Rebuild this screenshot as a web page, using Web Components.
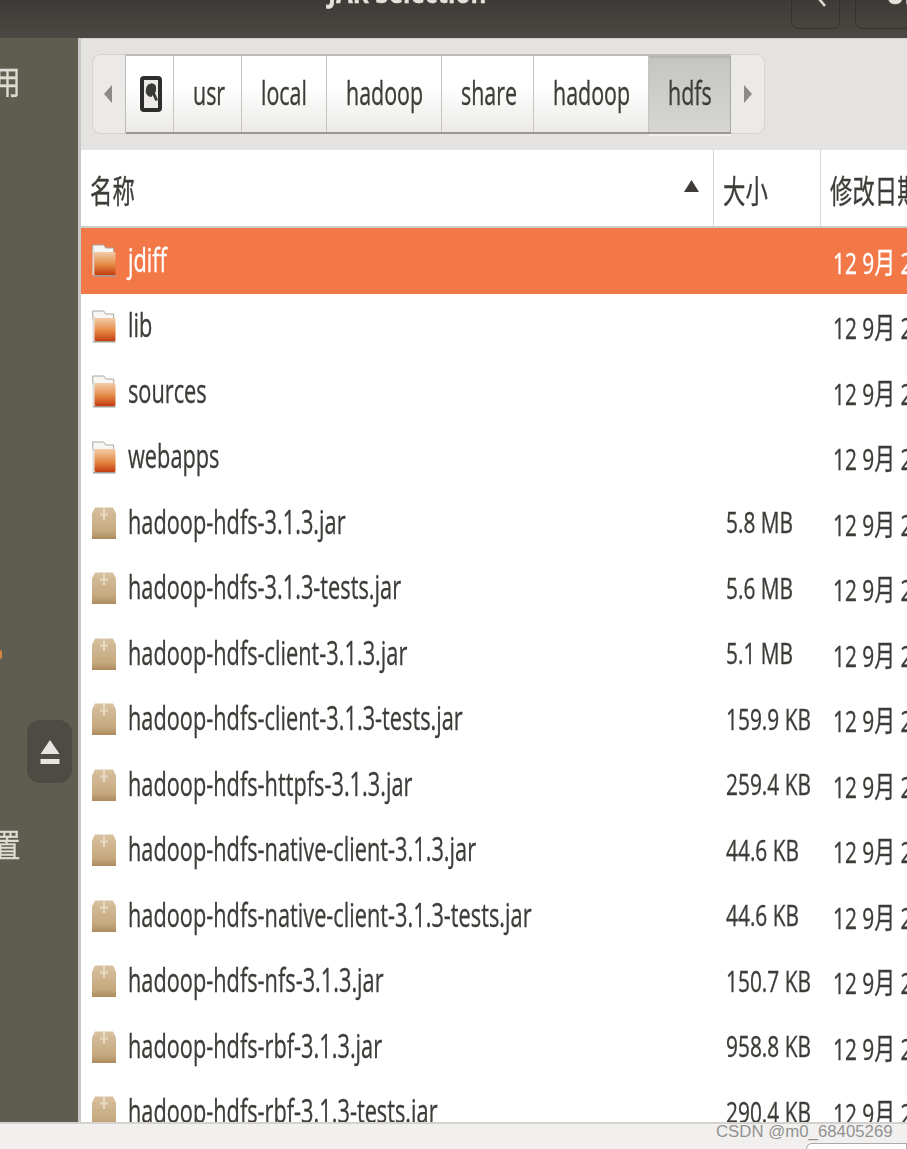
<!DOCTYPE html>
<html><head><meta charset="utf-8">
<style>
html,body{margin:0;padding:0;height:100%;overflow:hidden;background:#f1f0ee}
body{font-family:"Open Sans","Noto Sans CJK SC",sans-serif}
</style></head><body>
<file-dialog>
  <title-bar slot="title"></title-bar>
  <side-bar slot="side"></side-bar>
  <path-bar slot="path"></path-bar>
  <list-header slot="head"></list-header>
  <file-row slot="rows" kind="dir" name="jdiff" date="12 9月 2" selected></file-row>
  <file-row slot="rows" kind="dir" name="lib" date="12 9月 2"></file-row>
  <file-row slot="rows" kind="dir" name="sources" date="12 9月 2"></file-row>
  <file-row slot="rows" kind="dir" name="webapps" date="12 9月 2"></file-row>
  <file-row slot="rows" kind="jar" name="hadoop-hdfs-3.1.3.jar" size="5.8 MB" date="12 9月 2"></file-row>
  <file-row slot="rows" kind="jar" name="hadoop-hdfs-3.1.3-tests.jar" size="5.6 MB" date="12 9月 2"></file-row>
  <file-row slot="rows" kind="jar" name="hadoop-hdfs-client-3.1.3.jar" size="5.1 MB" date="12 9月 2"></file-row>
  <file-row slot="rows" kind="jar" name="hadoop-hdfs-client-3.1.3-tests.jar" size="159.9 KB" date="12 9月 2"></file-row>
  <file-row slot="rows" kind="jar" name="hadoop-hdfs-httpfs-3.1.3.jar" size="259.4 KB" date="12 9月 2"></file-row>
  <file-row slot="rows" kind="jar" name="hadoop-hdfs-native-client-3.1.3.jar" size="44.6 KB" date="12 9月 2"></file-row>
  <file-row slot="rows" kind="jar" name="hadoop-hdfs-native-client-3.1.3-tests.jar" size="44.6 KB" date="12 9月 2"></file-row>
  <file-row slot="rows" kind="jar" name="hadoop-hdfs-nfs-3.1.3.jar" size="150.7 KB" date="12 9月 2"></file-row>
  <file-row slot="rows" kind="jar" name="hadoop-hdfs-rbf-3.1.3.jar" size="958.8 KB" date="12 9月 2"></file-row>
  <file-row slot="rows" kind="jar" name="hadoop-hdfs-rbf-3.1.3-tests.jar" size="290.4 KB" date="12 9月 2"></file-row>
</file-dialog>
<script>
const FONT='"Open Sans","Noto Sans CJK SC",sans-serif';
function def(name,html){
  customElements.define(name,class extends HTMLElement{
    connectedCallback(){
      if(this.shadowRoot)return;
      const r=this.attachShadow({mode:'open'});
      r.innerHTML=typeof html==='function'?html(this):html;
    }
  });
}
/* squeezed text: the reference is a horizontally compressed, blurry photo */
def('sq-text',el=>{
  const sx=el.getAttribute('sx')||'.68', fs=el.getAttribute('fs')||'32', w=el.getAttribute('wt')||'400';
  return `<style>:host{display:block;width:0;white-space:nowrap;font:${w} ${fs}px/1 ${FONT}}
  span{display:inline-block;transform:scaleX(${sx});transform-origin:0 50%;filter:blur(.45px);-webkit-text-stroke:.35px currentColor}</style><span><slot></slot></span>`;
});
def('file-dialog',`<style>
:host{display:flex;flex-direction:column;width:907px;height:1149px;overflow:hidden;background:#f1f0ee}
.mid{display:flex;height:1084px;flex:none}
.main{flex:1;min-width:0;display:flex;flex-direction:column;background:#fff}
.rows{flex:1;overflow:hidden;min-height:0}
.foot{flex:1;background:#f1f0ee;border-top:2px solid #d3d2cf;display:flex;justify-content:flex-end;align-items:flex-end;position:relative}
.btn{width:99px;height:5px;background:#fff;border:1px solid #aaa;border-bottom:0;border-radius:6px 0 0 0}
.wm{position:absolute;left:716px;top:0;font:16.8px/1 "Liberation Sans",sans-serif;color:#929292;white-space:nowrap}
</style>
<slot name="title"></slot>
<div class="mid"><slot name="side"></slot>
<div class="main"><slot name="path"></slot><slot name="head"></slot><div class="rows"><slot name="rows"></slot></div></div></div>
<div class="foot"><div class="btn"></div><div class="wm">CSDN @m0_68405269</div></div>`);
def('title-bar',`<style>
:host{display:block;height:38px;flex:none;background:linear-gradient(#3c3b37,#4b4943);position:relative;overflow:hidden;color:#e6e2da}
.t{position:absolute;left:328px;top:-23px}
.b{position:absolute;top:-10px;border:1px solid #33322e;border-radius:7px;box-sizing:border-box;height:39px;overflow:hidden}
.b1{left:791px;width:49px}.b2{left:855px;width:60px}
svg{position:absolute;left:25px;top:-1px}
.o{position:absolute;left:30px;top:-13px}
</style>
<div class="t"><sq-text sx=".84" fs="29" wt="700">JAR Selection</sq-text></div>
<div class="b b1"><svg width="14" height="20" viewBox="0 0 14 20"><path d="M8 3L3 10l5 6" fill="none" stroke="#dfdbd2" stroke-width="2.6"/></svg></div>
<div class="b b2"><div class="o"><sq-text sx=".8" fs="29" wt="700">OK</sq-text></div></div>`);
def('side-bar',`<style>
:host{display:block;width:78px;flex:none;background:#5f5d50;border-right:3px solid #c9c9c7;position:relative;overflow:hidden;color:#dedcd5}
.a{position:absolute;left:-32px}
.ej{position:absolute;left:27px;top:682px;width:45px;height:63px;border-radius:13px;background:#4c4b44;display:flex;align-items:center;justify-content:center}
.dot{position:absolute;left:-3px;top:612px;width:5px;height:9px;border-radius:2px;background:#d9813f}
</style>
<div class="a" style="top:28px"><sq-text sx=".82" fs="32">常用</sq-text></div>
<div class="dot"></div>
<div class="ej"><svg width="20" height="26" viewBox="0 0 20 26"><path d="M10 1L19.500 15H.5z" fill="#e6e5e1"/><rect x=".5" y="20" width="19" height="5" fill="#e6e5e1"/></svg></div>
<div class="a" style="top:791px"><sq-text sx=".82" fs="32">设置</sq-text></div>`);
def('path-seg',el=>{
  const on=el.hasAttribute('on');
  const w=el.getAttribute('w');
  return `<style>:host{display:flex;align-items:center;box-sizing:border-box;width:${w}px;flex:none;padding-left:${el.getAttribute('p')||0}px;
  color:#3d3c38;border-right:1px solid ${on?'#a9a9a6':'#c6c5c1'};
  background:${on?'linear-gradient(#c4c4c3,#d7d6d5)':'linear-gradient(#fff 40%,#ebeae8)'};
  ${on?'box-shadow:inset 0 2px 1px #b5b5b3,0 2px 0 #9a9997,0 4px 0 #f0efed':''}}</style><slot></slot>`;
});
def('path-bar',`<style>
:host{display:block;height:112px;box-sizing:border-box;padding:15px 0 0 11px;background:#e4e3e1;flex:none;border-top:1px solid #cfcecc}
.bar{display:flex;width:673px;height:80px;box-sizing:border-box}
.arr{width:34px;flex:none;box-sizing:border-box;display:flex;align-items:center;justify-content:center;border:1.5px solid #d4d3d0;background:#eceae8}
.l{border-radius:9px 0 0 9px;border-right:1px solid #bcbbb8;padding-right:3px}
.r{border-radius:0 9px 9px 0;border-left:0}
.segs{display:flex;border-top:2px solid #bdbcb9;border-bottom:2px solid #9a9997}
sq-text{margin-top:-2px}
svg{filter:blur(.3px)}
</style>
<div class="bar">
<div class="arr l"><svg width="8" height="18" viewBox="0 0 8 18"><path d="M8 0V18L0 9z" fill="#8c8b87"/></svg></div>
<div class="segs">
<path-seg w="48" p="14"><svg width="22" height="36" viewBox="0 0 22 36"><rect x="2" y="2" width="18" height="32" rx="2" fill="#ecebe9" stroke="#2d2d2c" stroke-width="4"/><path d="M6 13a5.500 6 0 0 1 10-3v5l-1 2 3 7-2.500 1-3-6-1 2a6 6 0 0 1-5.500-8z" fill="#3a3a39"/></svg></path-seg>
<path-seg w="68" p="19"><sq-text sx=".67">usr</sq-text></path-seg>
<path-seg w="85" p="19"><sq-text sx=".67">local</sq-text></path-seg>
<path-seg w="115" p="19"><sq-text sx=".67">hadoop</sq-text></path-seg>
<path-seg w="92" p="19"><sq-text sx=".67">share</sq-text></path-seg>
<path-seg w="115" p="19"><sq-text sx=".67">hadoop</sq-text></path-seg>
<path-seg w="82" p="19" on><sq-text sx=".67">hdfs</sq-text></path-seg>
</div>
<div class="arr r"><svg width="8" height="18" viewBox="0 0 8 18"><path d="M0 0V18L8 9z" fill="#8c8b87"/></svg></div>
</div>`);
def('list-header',`<style>
:host{display:flex;height:78px;box-sizing:border-box;flex:none;background:#fff;border-bottom:2px solid #cdccca;color:#3d3c38;overflow:hidden}
.c{display:flex;align-items:center;box-sizing:border-box;flex:none;border-right:1px solid #d6d5d3;position:relative}
.n{width:633px;padding-left:9px}.s{width:107px;padding-left:9px}.d{width:100px;padding-left:9px;border:0}
sq-text{margin-top:6px}
svg{position:absolute;left:603px;top:30px}
</style>
<div class="c n"><sq-text sx=".7">名称</sq-text><svg width="15" height="12" viewBox="0 0 15 12"><path d="M7.500 0L15 12H0z" fill="#3d3c38"/></svg></div>
<div class="c s"><sq-text sx=".7">大小</sq-text></div>
<div class="c d"><sq-text sx=".7">修改日期</sq-text></div>`);
const DIR=`<svg width="24" height="33" viewBox="0 0 24 33"><defs><linearGradient id="g" x1="0" y1="0" x2="0" y2="1"><stop offset="0" stop-color="#f2cda9"/><stop offset=".55" stop-color="#e58a45"/><stop offset="1" stop-color="#c43c10"/></linearGradient></defs><path d="M.7 1h11l2 3h8v5H.7z" fill="#f7f6f3" stroke="#a9a7a2"/><rect x=".5" y="6" width="2" height="25" fill="#dedcd8"/><rect x="2.500" y="8" width="21" height="23" rx="1.500" fill="url(#g)"/><rect x="1" y="31" width="22.500" height="1.500" fill="#a09d98"/></svg>`;
const JAR=`<svg width="24" height="32" viewBox="0 0 24 32"><defs><linearGradient id="j" x1="0" y1="0" x2="0" y2="1"><stop offset="0" stop-color="#d8c19f"/><stop offset=".75" stop-color="#c5a97f"/><stop offset="1" stop-color="#ab8b5d"/></linearGradient></defs><path d="M3 .5h18l3 6V32H0V6.500z" fill="url(#j)"/><path d="M0 7.500h24" stroke="#cdb591" stroke-width="1"/><path d="M12 1v12M8 7.500h8" stroke="#e6d8c2" stroke-width="2.200" fill="none"/></svg>`;
def('file-row',el=>{
  const sel=el.hasAttribute('selected'), jar=el.getAttribute('kind')==='jar';
  return `<style>
  :host{display:flex;align-items:center;height:65.5px;box-sizing:border-box;padding-left:11px;overflow:hidden;white-space:nowrap;
    background:${sel?'#f27848':'#fff'};color:${sel?'#fff':'#3d3c38'}}
  .i{width:36px;flex:none;display:flex;height:34px;align-items:center;filter:blur(.4px)}
  .n{width:598px;flex:none;margin-top:-2px}.s{width:107px;flex:none;margin-top:-2px}.d{flex:1;margin-top:3px}
  </style>
  <div class="i">${jar?JAR:DIR}</div>
  <div class="n"><sq-text>${el.getAttribute('name')}</sq-text></div>
  <div class="s"><sq-text sx=".72" fs="29">${el.getAttribute('size')||''}</sq-text></div>
  <div class="d"><sq-text sx=".72" fs="29">${el.getAttribute('date')}</sq-text></div>`;
});
</script>
</body></html>
